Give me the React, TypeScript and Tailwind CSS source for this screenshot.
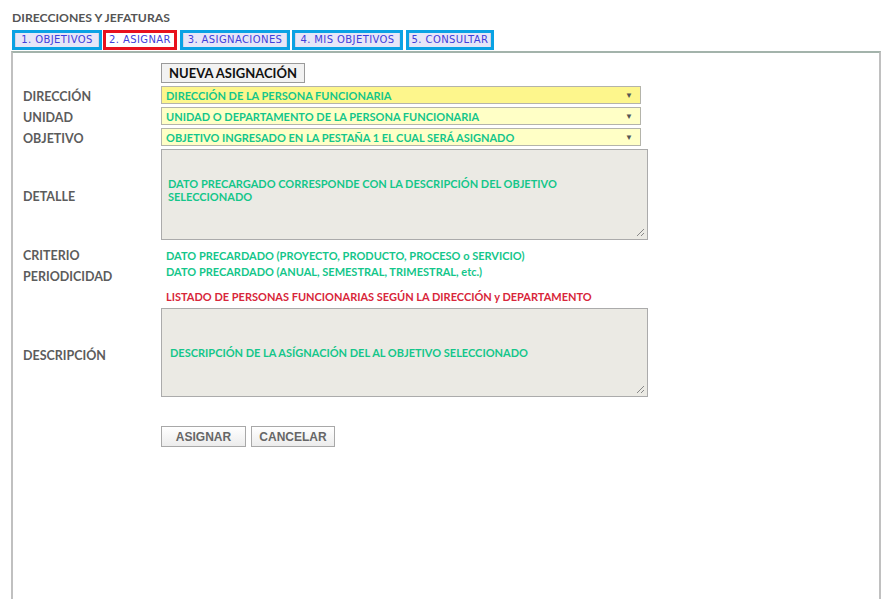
import React from 'react';

const tabs = [
    { label: '1. OBJETIVOS', active: false, cls: 'ml-0 w-[90px]' },
    { label: '2. ASIGNAR', active: true, cls: 'ml-[1px] w-[74px]' },
    { label: '3. ASIGNACIONES', active: false, cls: 'ml-[3px] w-[110px]' },
    { label: '4. MIS OBJETIVOS', active: false, cls: 'ml-[2px] w-[111px]' },
    { label: '5. CONSULTAR', active: false, cls: 'ml-[3px] w-[88px]' },
];

const Grip = () => (
    <svg className="absolute bottom-[2px] right-[2px]" width="9" height="9" viewBox="0 0 9 9">
        <line x1="1" y1="8" x2="8" y2="1" stroke="#888" strokeWidth="1" />
        <line x1="5" y1="8" x2="8" y2="5" stroke="#888" strokeWidth="1" />
    </svg>
);

const Select = ({ text, strong }: { text: string; strong?: boolean }) => (
    <div
        className={`flex h-[18px] w-[480px] items-center justify-between border border-[#b4b4aa] pl-[4px] pr-[7px] ${
            strong ? 'bg-[#fdf68c]' : 'bg-[#ffffc6]'
        }`}
    >
        <span className="text-[11px] font-bold leading-none text-[#14c68a]">{text}</span>
        <span className="text-[8px] leading-none text-[#555]">▼</span>
    </div>
);

const Label = ({ children, pad = 'pt-[4px]' }: { children: React.ReactNode; pad?: string }) => (
    <div className={`w-[138px] shrink-0 text-[12.5px] font-bold leading-none text-[#5c5c5c] ${pad}`}>{children}</div>
);

const App = () => {
    return (
        <div className="h-[599px] w-[896px] overflow-hidden bg-white font-['Lato','Open_Sans',sans-serif]">
            <div className="pl-[12px] pt-[10px] text-[12.2px] font-bold leading-[16px] text-[#555]">DIRECCIONES Y JEFATURAS</div>

            {/* tabs */}
            <div className="mt-[4px] flex pl-[12px]">
                {tabs.map((t) => (
                    <div
                        key={t.label}
                        className={`flex h-[20px] items-center border-[3px] ${t.cls} ${t.active ? 'border-[#e8121e]' : 'border-[#0aa2e4]'}`}
                    >
                        <div
                            className={`flex h-full w-full items-center justify-center font-['DejaVu_Sans',sans-serif] text-[10px] leading-none tracking-[0.4px] text-[#4040dc] ${
                                t.active ? 'bg-white' : 'border-x border-[#d4d4e4] bg-[#e6e6f8]'
                            }`}
                        >
                            {t.label}
                        </div>
                    </div>
                ))}
            </div>

            {/* panel */}
            <div className="ml-[11px] mt-[1px] h-[560px] w-[870px] border-x-2 border-t-2 border-x-[#c0c0c0] border-t-[#a3b3ab] pl-[10px] pt-[10px]">
                <div className="flex">
                    <div className="w-[138px] shrink-0" />
                    <button className="h-[20px] w-[144px] border border-[#9a9a9a] bg-[#f2f2f2] text-[13px] font-bold leading-none text-[#111]">
                        NUEVA ASIGNACIÓN
                    </button>
                </div>

                <div className="mt-[3px] flex items-center">
                    <Label>DIRECCIÓN</Label>
                    <Select text="DIRECCIÓN DE LA PERSONA FUNCIONARIA" strong />
                </div>
                <div className="mt-[3px] flex items-center">
                    <Label>UNIDAD</Label>
                    <Select text="UNIDAD O DEPARTAMENTO DE LA PERSONA FUNCIONARIA" />
                </div>
                <div className="mt-[3px] flex items-center">
                    <Label>OBJETIVO</Label>
                    <Select text="OBJETIVO INGRESADO EN LA PESTAÑA 1 EL CUAL SERÁ ASIGNADO" />
                </div>

                <div className="mt-[3px] flex items-center">
                    <Label pad="pt-[6px]">DETALLE</Label>
                    <div className="relative h-[91px] w-[487px] border border-[#ababab] bg-[#ebeae4] pl-[6px] pt-[27px] text-[11px] font-bold leading-[13px] text-[#14c68a]">
                        DATO PRECARGADO CORRESPONDE CON LA DESCRIPCIÓN DEL OBJETIVO
                        <br />
                        SELECCIONADO
                        <Grip />
                    </div>
                </div>

                <div className="mt-[5px] flex">
                    <div className="w-[138px] shrink-0 text-[12.5px] font-bold leading-[21px] text-[#5c5c5c]">
                        <div>CRITERIO</div>
                        <div>PERIODICIDAD</div>
                    </div>
                    <div className="pl-[5px] pt-[3px] text-[11px] font-bold leading-[16px] text-[#14c68a]">
                        <div>DATO PRECARDADO (PROYECTO, PRODUCTO, PROCESO o SERVICIO)</div>
                        <div>DATO PRECARDADO (ANUAL, SEMESTRAL, TRIMESTRAL, etc.)</div>
                    </div>
                </div>

                <div className="mt-[3px] flex">
                    <div className="w-[138px] shrink-0" />
                    <div className="pl-[5px] text-[11px] font-bold leading-[14px] text-[#d8263a]">
                        LISTADO DE PERSONAS FUNCIONARIAS SEGÚN LA DIRECCIÓN y DEPARTAMENTO
                    </div>
                </div>

                <div className="mt-[4px] flex items-center">
                    <Label pad="pt-[8px]">DESCRIPCIÓN</Label>
                    <div className="relative flex h-[89px] w-[487px] items-center border border-[#ababab] bg-[#ebeae4] pb-[1px] pl-[8px] text-[11px] font-bold leading-none text-[#14c68a]">
                        DESCRIPCIÓN DE LA ASÍGNACIÓN DEL AL OBJETIVO SELECCIONADO
                        <Grip />
                    </div>
                </div>

                <div className="mt-[29px] flex gap-[5px]">
                    <div className="w-[133px] shrink-0" />
                    <button className="h-[21px] w-[85px] border border-[#a8a8a8] bg-gradient-to-b from-white to-[#ececec] font-['Liberation_Sans',sans-serif] text-[12px] font-bold leading-none text-[#666]">
                        ASIGNAR
                    </button>
                    <button className="h-[21px] w-[84px] border border-[#a8a8a8] bg-gradient-to-b from-white to-[#ececec] font-['Liberation_Sans',sans-serif] text-[12px] font-bold leading-none text-[#666]">
                        CANCELAR
                    </button>
                </div>
            </div>
        </div>
    );
};

export default App;
